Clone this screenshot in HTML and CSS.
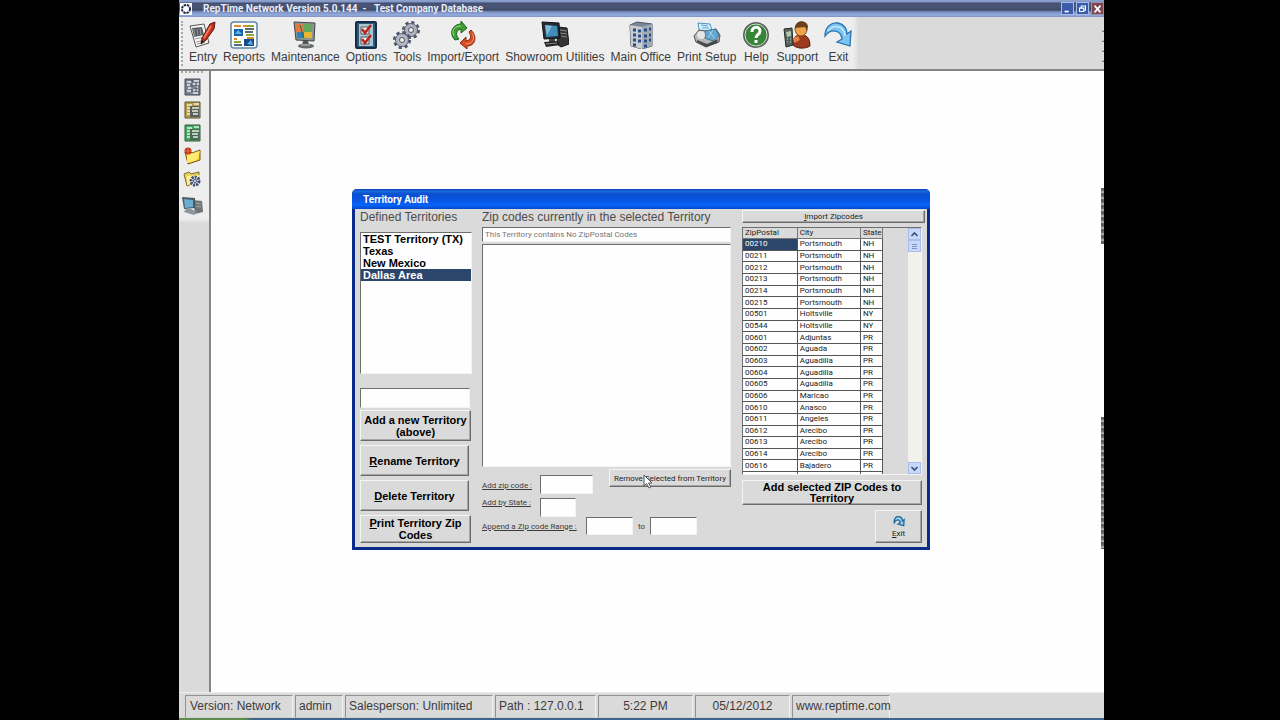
FILE: index.html
```html
<!DOCTYPE html>
<html lang="en">
<head>
<meta charset="utf-8">
<title>RepTime Network</title>
<link rel="stylesheet" href="styles.css">
</head>
<body>
<div class="app">
  <header class="titlebar">
    <svg class="app-icon" width="12" height="12" viewBox="0 0 12 12"><rect width="12" height="12" fill="#fff"/><circle cx="6" cy="6" r="4" fill="none" stroke="#1c2748" stroke-width="2" stroke-dasharray="2.4 .8"/></svg>
    <h1 class="app-title">RepTime Network Version 5.0.144 &nbsp;- &nbsp;&nbsp;Test Company Database</h1>
    <div class="window-buttons">
      <button class="win-btn" aria-label="Minimize"><svg width="13" height="12" viewBox="0 0 13 12"><path d="M3 9h5" stroke="#fff" stroke-width="2"/></svg></button>
      <button class="win-btn" aria-label="Restore"><svg width="13" height="12" viewBox="0 0 13 12"><path d="M5 5V2.500h5v5H8M3 5h5v4H3z" fill="none" stroke="#fff" stroke-width="1.300"/></svg></button>
      <button class="win-btn win-close" aria-label="Close"><svg width="13" height="12" viewBox="0 0 13 12"><path d="M3 2l7 8M10 2l-7 8" stroke="#fff" stroke-width="2"/></svg></button>
    </div>
  </header>

  <nav class="toolbar">
    <div class="grip"></div>
    <button class="tool"><svg width="28" height="28" viewBox="0 0 28 28"><path d="M1 5l14-2 5 19-13 4z" fill="#f7f7f7" stroke="#555"/><path d="M3 7l10-1 2 8-10 2z" fill="#555b60"/><path d="M5 8l1 7M8 8l1 6M11 7l1 7" stroke="#999"/><path d="M6 18l10-2M7 21l10-2M8 23l8-2" stroke="#999"/><path d="M26 1l-5 2-8 14-1 6 5-4 8-11z" fill="#c5301f" stroke="#57160e"/><path d="M22 5l-7 12" stroke="#f0785b" stroke-width="2"/><path d="M12 23l1-4 2 2z" fill="#222"/></svg><span>Entry</span></button>
    <button class="tool"><svg width="28" height="28" viewBox="0 0 28 28"><rect x="1" y="1" width="26" height="26" rx="3" fill="#fff" stroke="#5c87a8" stroke-width="1.500"/><path d="M4 5h7M13 5h4M4 18h3M17 17h7" stroke="#e38b25" stroke-width="2"/><path d="M17 5h7M4 21h7M16 14h8" stroke="#8ca834" stroke-width="2"/><path d="M15 8h9M15 11h8M4 24h8" stroke="#5a6b78" stroke-width="2"/><rect x="4" y="8" width="9" height="7" fill="#1763aa"/><path d="M5 13l3-4 4 4z" fill="#60b5e1"/><rect x="14" y="18" width="10" height="7" fill="#164c8c"/><path d="M17 23l4-4 2 5z" fill="#5dafd9"/></svg><span>Reports</span></button>
    <button class="tool"><svg width="28" height="28" viewBox="0 0 28 28"><path d="M3 1l21 1-1 18-18-1z" fill="#8b9495" stroke="#444"/><path d="M5 3h8v8H5z" fill="#e37945"/><path d="M13 3h8v8h-8z" fill="#63a85b"/><path d="M6 11h7v6H6z" fill="#337fb7"/><path d="M13 11h8v6h-8z" fill="#e9b631"/><path d="M9 4l4 13" stroke="#286b59"/><path d="M12 20h5l1 4H11z" fill="#555"/><ellipse cx="15" cy="25" rx="8" ry="2.500" fill="#646a6d"/><path d="M10 24h9" stroke="#ccc"/></svg><span>Maintenance</span></button>
    <button class="tool"><svg width="28" height="28" viewBox="0 0 28 28"><rect x="4" y="1" width="20" height="26" rx="1" fill="#315a78" stroke="#142e48" stroke-width="2"/><path d="M7 3h14v22H7z" fill="#a9c6d5"/><path d="M9 6h8v7H9zM9 16h8v7H9z" fill="#eee" stroke="#555"/><path d="M10 8l3 4 6-8M10 18l3 4 6-8" fill="none" stroke="#b3241d" stroke-width="2.500"/></svg><span>Options</span></button>
    <button class="tool"><svg width="28" height="28" viewBox="0 0 28 28"><circle cx="18" cy="9" r="7" fill="none" stroke="#50566a" stroke-width="4" stroke-dasharray="3 2.500"/><circle cx="18" cy="9" r="6.500" fill="#adb2c3" stroke="#5d6274"/><circle cx="18" cy="9" r="2.500" fill="#eee" stroke="#555"/><circle cx="9" cy="19" r="7" fill="none" stroke="#50566a" stroke-width="4" stroke-dasharray="3 2.500"/><circle cx="9" cy="19" r="6.500" fill="#b3b7c6" stroke="#5d6274"/><circle cx="9" cy="19" r="2.500" fill="#eee" stroke="#555"/></svg><span>Tools</span></button>
    <button class="tool"><svg width="28" height="28" viewBox="0 0 28 28"><path d="M6 19C-1 12 4 3 12 3V0l6 7-6 5V8c-5 1-6 6-2 10z" fill="#429b34" stroke="#19661b"/><path d="M5 15C2 9 6 5 12 5" fill="none" stroke="#9edb7c"/><path d="M22 9c7 7 4 16-4 16v3l-7-6 6-6v4c5-1 6-4 3-9z" fill="#dd4b20" stroke="#832813"/><path d="M23 12c4 6 0 11-6 11" fill="none" stroke="#f7a070"/></svg><span>Import/Export</span></button>
    <button class="tool"><svg width="28" height="28" viewBox="0 0 28 28"><path d="M17 6l9 1 2 16-8 3-4-3z" fill="#333638" stroke="#171717"/><path d="M19 9l7 1M19 12l7 1M20 15l6 1" stroke="#888"/><path d="M1 1l17 1 1 15-16 1z" fill="#222d35" stroke="#111"/><path d="M4 4l12 1 1 10-12 1z" fill="#438dbc"/><path d="M4 4l7 1-5 9z" fill="#83bad8"/><path d="M8 18h6v3H8z" fill="#444"/><path d="M3 21l14-1 2 4-14 2z" fill="#252525"/><path d="M5 23l11-1" stroke="#888"/></svg><span>Showroom Utilities</span></button>
    <button class="tool"><svg width="28" height="28" viewBox="0 0 28 28"><path d="M3 4l7-3 15 2v22l-10 3-11-3z" fill="#798796" stroke="#4d5862"/><path d="M3 4l12 2v22L4 25z" fill="#c9cdd0"/><path d="M15 6l10-3v22l-10 3z" fill="#a3abb4"/><path d="M6 9h3M11 10h3M17 9h3M22 8h2M6 14h3M11 15h3M17 15h3M22 14h2M6 19h3M11 20h3M17 20h3M22 19h2M6 24h3M17 25h3" stroke="#274c88" stroke-width="3"/></svg><span>Main Office</span></button>
    <button class="tool"><svg width="28" height="28" viewBox="0 0 28 28"><path d="M5 2l12 1 3 10-13 1z" fill="#d9f1ff" stroke="#4c91c4"/><path d="M8 4l7 1M9 7h7" stroke="#5b9cc5"/><path d="M1 15l5-6 7 1 10-2 4 6-1 7-13 5-10-5z" fill="#b5b7b9" stroke="#515457"/><path d="M12 10l11-2 3 7-6 5-8-3z" fill="#63a7d0" stroke="#407593"/><path d="M16 10l6 8M20 9l-5 8" stroke="#a5d2ea"/><path d="M4 19l10 4 11-5-1 4-11 4-9-5z" fill="#45494b"/><circle cx="8" cy="14" r="4" fill="#e6e6e6"/></svg><span>Print Setup</span></button>
    <button class="tool"><svg width="28" height="28" viewBox="0 0 28 28"><circle cx="14" cy="14" r="12" fill="#388439" stroke="#59625a" stroke-width="2"/><circle cx="14" cy="14" r="11" fill="none" stroke="#d1dfcc"/><path d="M10 11c0-6 8-6 8-1 0 4-4 3-4 7" fill="none" stroke="#fff" stroke-width="3"/><path d="M12.500 19h3v3h-3z" fill="#fff"/></svg><span>Help</span></button>
    <button class="tool"><svg width="28" height="28" viewBox="0 0 28 28"><path d="M10 24c0-8 3-10 8-10s9 2 9 11c-5 3-13 3-17-1z" fill="#9c3b22" stroke="#572014"/><ellipse cx="18" cy="8" rx="6" ry="7" fill="#efa449" stroke="#8a4e20"/><path d="M12 7c0-8 11-9 13-2l-1 5-2-4z" fill="#67401e"/><path d="M1 8l8-1 1 17-7 2z" fill="#56645a" stroke="#202d27"/><path d="M3 11l5-1v5l-4 1z" fill="#b2c5b4"/><path d="M4 18h1M7 18h1M4 21h1M7 21h1" stroke="#ccc"/><path d="M10 17l5-2 2 4-6 3z" fill="#ec8143"/></svg><span>Support</span></button>
    <button class="tool"><svg width="28" height="28" viewBox="0 0 28 28"><path d="M1 15C1 5 8 1 14 2c6 1 9 6 9 11l4-3-1 15-13-4 5-3C17 9 7 7 1 15z" fill="#7cc4f0" stroke="#2a72b0" stroke-width="1.300"/><path d="M4 10c5-7 16-6 17 5" fill="none" stroke="#c5eafc" stroke-width="1.500"/></svg><span>Exit</span></button>
  </nav>

  <main class="workspace">
    <nav class="sidebar" aria-label="Shortcuts">
      <div class="side-grip"></div>
      <button class="side sheet-grey" aria-label="Orders"><svg width="17" height="18" viewBox="0 0 17 18"><path class="paper" d="M1 1h15v16H1z"/><path d="M3 4h5M10 3h5M3 7h3M8 6h7M4 10h5M11 9h3M3 13h4M9 12h5M7 15h7" stroke="#eceef0" stroke-width="1.500"/><path d="M8 2v14M12 4v10" stroke="#444b58"/></svg></button>
      <button class="side sheet-gold" aria-label="Quotes"><svg width="17" height="18" viewBox="0 0 17 18"><path class="paper" d="M1 1h15v16H1z"/><path d="M6 5h9v11H6z" fill="#58605f"/><path d="M3 4h5M10 3h5M3 7h3M8 7h7M8 10h6M3 10h3M3 13h3M9 13h5" stroke="#f1eed7" stroke-width="1.500"/></svg></button>
      <button class="side sheet-green" aria-label="Invoices"><svg width="17" height="18" viewBox="0 0 17 18"><path class="paper" d="M1 1h15v16H1z"/><path d="M6 5h9v11H6z" fill="#4c6554"/><path d="M3 4h5M10 3h5M3 7h3M8 7h7M8 10h6M3 10h3M3 13h3M9 13h5" stroke="#dcf5df" stroke-width="1.500"/></svg></button>
      <button class="side" aria-label="New folder"><svg width="19" height="18" viewBox="0 0 19 18"><path d="M2 5l5-1 2 2 8-3v10L5 17z" fill="#f3c928" stroke="#7a5718"/><path d="M4 8l13-4-3 9-10 3z" fill="#ffeb70"/><circle cx="5" cy="4" r="3.500" fill="#b8321c"/><path d="M5 1v6M2 4h6" stroke="#f17235"/></svg></button>
      <button class="side" aria-label="Folder settings"><svg width="19" height="18" viewBox="0 0 19 18"><path d="M1 4l5-2 2 2 8-2v9L4 16z" fill="#ead35a" stroke="#7b692c"/><path d="M4 6l13-1-2 8-11 2z" fill="#fff1a0"/><circle cx="12" cy="11" r="4" fill="#dde1ed" stroke="#3d4b71" stroke-width="3" stroke-dasharray="2 1"/><circle cx="12" cy="11" r="1.500" fill="#fff" stroke="#3d4b71"/></svg></button>
      <button class="side side-wide" aria-label="Workstation"><svg width="22" height="20" viewBox="0 0 22 20"><path d="M12 4l9 1 1 11-8 2z" fill="#6d7579"/><path d="M1 1l13 1v10L3 13z" fill="#4a5b64"/><path d="M3 3l9 1v7l-8 1z" fill="#66aed4"/><path d="M5 13h5l6 3-3 3-10-3z" fill="#8c979b"/><path d="M15 7l5 1M15 10l5 1" stroke="#aaa"/></svg></button>
    </nav>
    <div class="canvas"></div>
  </main>

  <footer class="statusbar">
    <span class="panel p-version">Version: Network</span>
    <span class="panel p-user">admin</span>
    <span class="panel p-sales">Salesperson: Unlimited</span>
    <span class="panel p-path">Path : 127.0.0.1</span>
    <span class="panel p-time">5:22 PM</span>
    <span class="panel p-date">05/12/2012</span>
    <span class="panel p-site">www.reptime.com</span>
  </footer>
  <div class="taskbar-edge"></div>
  <div class="edge edge-a"></div>
  <div class="edge edge-b"></div>
  <div class="edge edge-c"></div>

  <section class="dialog" aria-labelledby="dlg-title">
    <h2 class="dialog-title" id="dlg-title">Territory Audit</h2>
    <div class="dialog-body">
      <div class="col-left">
        <label class="heading" for="territories">Defined Territories</label>
        <select class="territories" id="territories" size="4">
          <option>TEST Territory (TX)</option>
          <option>Texas</option>
          <option>New Mexico</option>
          <option selected>Dallas Area</option>
        </select>
        <input class="field new-name" type="text" aria-label="New territory name">
        <button class="btn bold">Add a new Territory (above)</button>
        <button class="btn bold short"><span><u>R</u>ename Territory</span></button>
        <button class="btn bold short"><span><u>D</u>elete Territory</span></button>
        <button class="btn bold last"><span><u>P</u>rint Territory Zip Codes</span></button>
      </div>

      <div class="col-mid">
        <label class="heading" for="zip-status">Zip codes currently in the selected Territory</label>
        <input class="field zip-status" id="zip-status" type="text" readonly value="This Territory contains No ZipPostal Codes">
        <select class="zip-list" id="zip-list" size="5" aria-label="Zip codes in territory"></select>
        <div class="forms">
          <div class="form-grid">
            <label class="low" for="add-zip"><u>Add zip code :</u></label>
            <input class="field w-zip" id="add-zip" type="text" value="">
            <label class="high" for="add-state"><u>Add by State :</u></label>
            <input class="field w-state" id="add-state" type="text">
          </div>
          <button class="btn remove">Remove Selected from Territory</button>
        </div>
        <div class="range">
          <label for="from"><u>Append a Zip code Range :</u></label>
          <input class="field w-range" id="from" type="text">
          <label class="to" for="to">to</label>
          <input class="field w-range" id="to" type="text">
        </div>
      </div>

      <div class="col-right">
        <button class="btn import"><span><u>I</u>mport Zipcodes</span></button>
        <div class="grid-box">
          <table class="zips">
            <thead><tr><th class="c-zip">ZipPostal</th><th class="c-city">City</th><th class="c-state">State</th></tr></thead>
            <tbody>
              <tr><td class="picked">00210</td><td>Portsmouth</td><td>NH</td></tr>
              <tr><td>00211</td><td>Portsmouth</td><td>NH</td></tr>
              <tr><td>00212</td><td>Portsmouth</td><td>NH</td></tr>
              <tr><td>00213</td><td>Portsmouth</td><td>NH</td></tr>
              <tr><td>00214</td><td>Portsmouth</td><td>NH</td></tr>
              <tr><td>00215</td><td>Portsmouth</td><td>NH</td></tr>
              <tr><td>00501</td><td>Holtsville</td><td>NY</td></tr>
              <tr><td>00544</td><td>Holtsville</td><td>NY</td></tr>
              <tr><td>00601</td><td>Adjuntas</td><td>PR</td></tr>
              <tr><td>00602</td><td>Aguada</td><td>PR</td></tr>
              <tr><td>00603</td><td>Aguadilla</td><td>PR</td></tr>
              <tr><td>00604</td><td>Aguadilla</td><td>PR</td></tr>
              <tr><td>00605</td><td>Aguadilla</td><td>PR</td></tr>
              <tr><td>00606</td><td>Maricao</td><td>PR</td></tr>
              <tr><td>00610</td><td>Anasco</td><td>PR</td></tr>
              <tr><td>00611</td><td>Angeles</td><td>PR</td></tr>
              <tr><td>00612</td><td>Arecibo</td><td>PR</td></tr>
              <tr><td>00613</td><td>Arecibo</td><td>PR</td></tr>
              <tr><td>00614</td><td>Arecibo</td><td>PR</td></tr>
              <tr><td>00616</td><td>Bajadero</td><td>PR</td></tr>
              <tr><td>00617</td><td>Barceloneta</td><td>PR</td></tr>
            </tbody>
          </table>
          <div class="scroll">
            <button class="sb" aria-label="Scroll up"><svg width="11" height="11" viewBox="0 0 11 11"><path d="M2.500 7l3-3 3 3" fill="none" stroke="#34507f" stroke-width="1.700"/></svg></button>
            <div class="thumb"><svg width="11" height="11" viewBox="0 0 11 11"><path d="M3 3.500h5M3 5.500h5M3 7.500h5" stroke="#7d96c9"/></svg></div>
            <button class="sb sb-down" aria-label="Scroll down"><svg width="11" height="11" viewBox="0 0 11 11"><path d="M2.500 4l3 3 3-3" fill="none" stroke="#34507f" stroke-width="1.700"/></svg></button>
          </div>
        </div>
        <button class="btn bold add-zips">Add selected ZIP Codes to Territory</button>
        <button class="btn exit"><svg width="12" height="12" viewBox="0 0 28 28"><path d="M3 18C2 7 8 3 14 4c6 1 8 5 8 10l4-3-1 14-13-4 5-3C16 10 8 9 3 18z" fill="#9ad4ee" stroke="#1d679c" stroke-width="3"/></svg><span><u>E</u>xit</span></button>
      </div>
    </div>
    <svg class="cursor" width="10" height="15" viewBox="0 0 10 15"><path d="M1 1v11l2.500-2.500L6 14l2-1-2.500-4H9z" fill="#fff" stroke="#555" stroke-width="1"/></svg>
  </section>
</div>
</body>
</html>
```
FILE: styles.css
```css
* { box-sizing: border-box; }
body {
  margin: 0;
  background: #000;
  font-family: "Liberation Sans", Arial, sans-serif;
  font-size: 12px;
  color: #3c3c3c;
}
button, input, select { font: inherit; color: inherit; margin: 0; padding: 0; border-radius: 0; outline: none; }
h1, h2 { margin: 0; }

.app {
  position: relative;
  display: flex;
  flex-direction: column;
  min-height: 100vh;
  margin: 0 176px 0 179px;
  background: #dadada;
}

/* main window caption */
.titlebar {
  display: flex;
  align-items: center;
  gap: 11px;
  height: 17px;
  padding-left: 1px;
  background: linear-gradient(#8fa3cf 0, #8296c4 2px, #424d70 3px, #4c5879 6px, #3e4868 10px, #7d92c3 12px, #94abe0 15px, #7d91c0 17px);
}
.app-title {
  flex: 1;
  font: bold 10px Roboto, sans-serif;
  line-height: 16px;
  color: #e8edf9;
  white-space: nowrap;
}
.window-buttons { display: flex; gap: 2px; align-items: center; }
.win-btn { display: flex; width: 13px; height: 13px; border: 1px solid #a9bce8; background: #3a5cab; align-items: center; justify-content: center; }
.win-close { background: #7e4550; border-color: #9b8fa8; }

/* toolbar */
.toolbar {
  display: flex;
  gap: 6px;
  height: 54px;
  padding: 4px 0 0 2px;
  border-bottom: 2px solid #858585;
  background: linear-gradient(90deg, #eee 0, #eee 674px, #dadada 680px);
}
.grip { width: 2px; height: 45px; border-left: 2px dotted #aaa; }
.tool {
  display: flex;
  flex-direction: column;
  align-items: center;
  border: 0;
  background: none;
  line-height: 17px;
  white-space: nowrap;
}
.tool svg { flex: none; }

/* work area */
.workspace { display: flex; flex: 1; }
.sidebar {
  display: flex;
  flex-direction: column;
  align-items: center;
  gap: 5px;
  width: 32px;
  padding: 0 5px 0 1px;
  border-right: 2px solid #858585;
  background: linear-gradient(#ededed 0, #ededed 148px, #dadada 152px);
}
.side-grip { width: 22px; height: 2px; border-top: 2px dotted #aaa; }
.side { display: flex; width: 22px; height: 18px; justify-content: center; border: 0; background: none; }
.side-wide { height: 23px; align-items: flex-end; }
.sheet-grey .paper { fill: #777e8e; stroke: #454b58; }
.sheet-gold .paper { fill: #b99b43; stroke: #5d5534; }
.sheet-green .paper { fill: #43a860; stroke: #315c3f; }
.canvas { flex: 1; background: #fefefe; }

/* status bar */
.statusbar {
  display: flex;
  gap: 2px;
  height: 26px;
  padding: 2px 0 0 6px;
  border-top: 1px solid #eee;
}
.panel {
  flex: none;
  padding-left: 4px;
  border: 1px solid;
  border-color: #919191 #f2f2f2 #d0d0d0 #919191;
  line-height: 21px;
  white-space: nowrap;
}
.p-version { width: 108px; }
.p-user { width: 48px; padding-left: 3px; }
.p-sales { width: 148px; padding-left: 3px; }
.p-path { width: 101px; padding-left: 3px; }
.p-time { width: 95px; padding: 0; text-align: center; }
.p-date { width: 95px; padding: 0; text-align: center; }
.p-site { width: 98px; padding-left: 3px; }
.taskbar-edge { height: 2px; background: linear-gradient(90deg, #5d8c4c 0, #5d8c4c 66px, #3d668c 74px, #3d668c 100%); }

/* slivers of the desktop showing past the window's right side */
.edge { position: absolute; right: 0; width: 3px; background: repeating-linear-gradient(#555 0, #777 3px, #ccc 4px, #444 6px); }
.edge-a { top: 22px; height: 40px; width: 2px; background: repeating-linear-gradient(#ddd 0, #ddd 8px, #556 10px); }
.edge-b { top: 188px; height: 56px; }
.edge-c { top: 417px; height: 132px; }

/* Territory Audit window */
.dialog {
  position: absolute;
  top: 189px;
  left: 173px;
  width: 578px;
  border: 3px solid #0a2a8c;
  border-top: 0;
  border-radius: 5px 5px 0 0;
  background: #dadada;
}
.dialog-title {
  height: 20px;
  margin: 0 -3px;
  padding-left: 11px;
  border-radius: 5px 5px 0 0;
  background: linear-gradient(#0a3db0 0, #1b6ae0 2px, #0b50cf 5px, #0753dd 10px, #0864fa 16px, #0348c8 20px);
  font: bold 10px Roboto, sans-serif;
  line-height: 22px;
  color: #fff;
}
.dialog-body {
  display: grid;
  grid-template-columns: 112px 249px 184px;
  gap: 10px;
  height: 338px;
  padding: 1px 0 0 5px;
}
.heading { display: block; height: 17px; line-height: 14px; white-space: nowrap; color: #4c4c4c; }
.field, .territories, .zip-list, .grid-box {
  border: 1px solid;
  border-color: #6e6e6e #f4f4f4 #f4f4f4 #6e6e6e;
  background: #fefefe;
}
.btn {
  border: 1px solid;
  border-color: #f4f4f4 #6c6c6c #6c6c6c #f4f4f4;
  box-shadow: inset -1px -1px #a5a5a5;
  background: #dadada;
  color: #222;
  font-family: Roboto, sans-serif;
  font-size: 8px;
}
.bold { font-family: "Liberation Sans", Arial, sans-serif; font-size: 11px; font-weight: bold; line-height: 12px; color: #000; }

.col-left { display: flex; flex-direction: column; }
.territories {
  height: 142px;
  margin: 5px 0 14px;
  overflow: hidden;
  font-size: 11px;
  color: #000;
}
.territories option { height: 12px; min-height: 12px; padding: 0 2px; font-weight: bold; line-height: 12px; }
.territories option:checked { background: #2b456b linear-gradient(#2b456b, #2b456b); color: #fff; }
.new-name { width: 110px; height: 20px; margin-bottom: 2px; }
.col-left .btn { width: 111px; height: 31px; margin-bottom: 4px; }
.col-left .short { width: 109px; }
.col-left .last { height: 28px; }

.col-mid { display: flex; flex-direction: column; font-family: Roboto, sans-serif; font-size: 8px; }
.col-mid .heading { font-family: "Liberation Sans", Arial, sans-serif; font-size: 12px; }
.zip-status { height: 15px; margin-bottom: 2px; padding-left: 2px; color: #777; }
.zip-list { height: 223px; overflow: hidden; }
.forms { display: flex; justify-content: space-between; padding-top: 2px; }
.form-grid { display: grid; grid-template-columns: 58px auto; row-gap: 4px; padding-top: 6px; justify-items: start; line-height: 10px; }
.low { align-self: end; padding-bottom: 3px; }
.high { align-self: start; }
.w-zip { width: 53px; height: 19px; }
.w-state { width: 36px; height: 19px; }
.remove { width: 122px; height: 18px; }
.range { display: flex; align-items: center; }
.range label:first-child { width: 104px; }
.range .to { width: 17px; text-align: center; }
.w-range { width: 47px; height: 18px; }

.col-right { display: flex; flex-direction: column; align-items: flex-start; padding-left: 1px; }
.import { width: 183px; height: 13px; line-height: 10px; }
.grid-box {
  display: flex;
  justify-content: space-between;
  width: 180px;
  height: 248px;
  margin: 4px 0 5px;
  overflow: hidden;
  background: #dadada;
}
.zips { width: 140px; height: 256px; border-collapse: collapse; table-layout: fixed; font-family: Roboto, sans-serif; font-size: 8px; line-height: 10px; color: #222; }
.zips th { padding: 0 2px; border: 1px solid #777; border-top: 0; border-left: 0; font-weight: normal; text-align: left; }
.zips td { padding: 0 2px; border: 1px solid #555; border-left: 0; background: #fefefe; }
.c-zip { width: 54px; }
.c-city { width: 63px; }
.c-state { width: 22px; }
.zips td.picked { background: #2b456b; color: #fff; }
.scroll { display: flex; flex-direction: column; width: 13px; background: #f2f1ec; }
.sb, .thumb { display: flex; align-items: center; justify-content: center; width: 13px; height: 12px; border: 1px solid #a9bde8; background: #c9d8fa; }
.sb-down { margin-top: auto; }
.add-zips { width: 180px; height: 25px; line-height: 11px; }
.exit { display: flex; flex-direction: column; align-items: center; justify-content: center; gap: 2px; width: 47px; height: 33px; margin: 5px 0 0 133px; }

.cursor { position: absolute; left: 288px; top: 285px; }
```
